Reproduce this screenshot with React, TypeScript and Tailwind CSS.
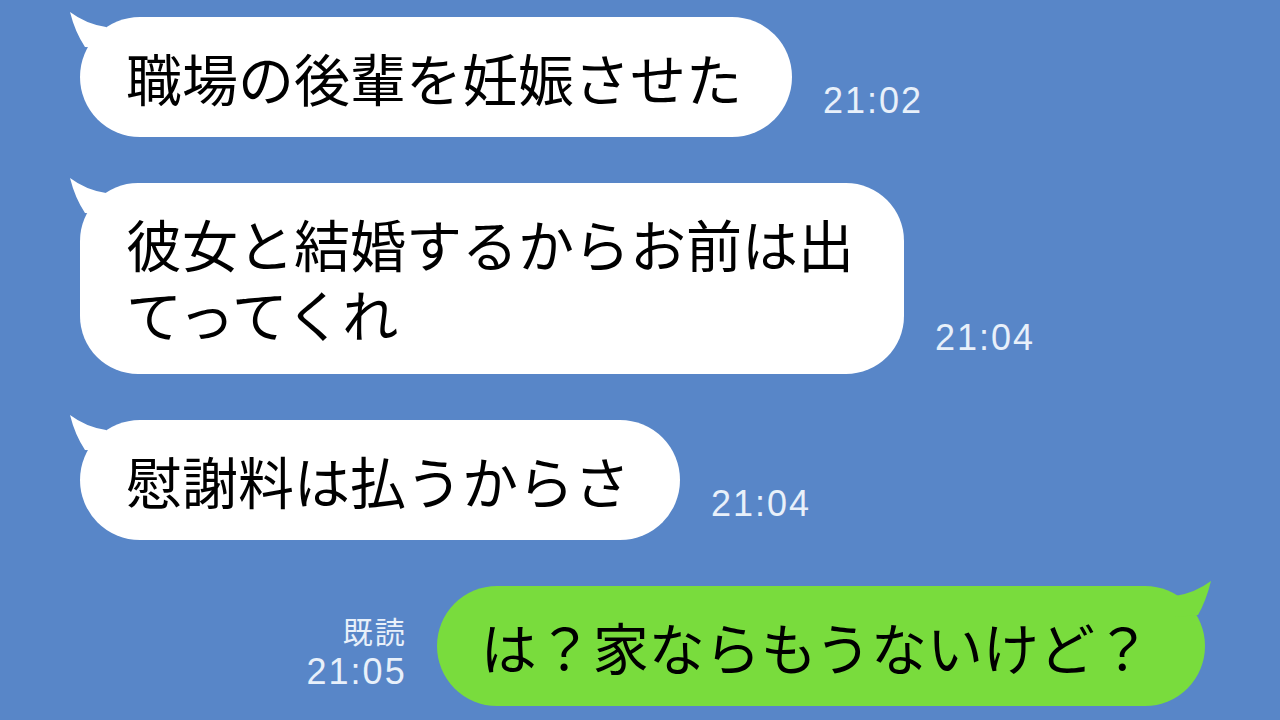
import React from "react";

const JP = '"Noto Sans CJK JP", "Noto Sans", sans-serif';
const TIME = '"Liberation Sans", "Noto Sans CJK JP", sans-serif';

function LeftTail() {
  return (
    <svg
      className="absolute left-[-12px] top-[-7px]"
      width="50"
      height="50"
      viewBox="0 0 50 50"
    >
      <path d="M2 2 Q7 22 17 37 L38 38 L38 17 Q18 14 2 2 Z" fill="#ffffff" />
    </svg>
  );
}

function RightTail() {
  return (
    <svg
      className="absolute right-[-8px] top-[-7px] scale-x-[-1]"
      width="50"
      height="50"
      viewBox="0 0 50 50"
    >
      <path d="M2 2 Q7 22 15 36 L38 38 L38 17 Q18 14 2 2 Z" fill="#79dc3d" />
    </svg>
  );
}

function Time({ t }: { t: string }) {
  return (
    <div
      className="text-[36px] leading-none tracking-[2px] text-[#e8f0fa] mb-[18px]"
      style={{ fontFamily: TIME }}
    >
      {t}
    </div>
  );
}

function LeftBubble({ children, rounded, pb }: { children: React.ReactNode; rounded: string; pb: string }) {
  return (
    <div
      className={`relative bg-white ${rounded} ${pb} pl-[46px] pr-[50px] pt-[25px] text-[56px] leading-[70px] text-black whitespace-nowrap`}
      style={{ fontFamily: JP }}
    >
      <LeftTail />
      <span className="relative">{children}</span>
    </div>
  );
}

export default function App() {
  return (
    <div className="w-[1280px] h-[720px] bg-[#5886c8] overflow-hidden flex flex-col pl-[80px] pt-[17px] gap-[46px]">
      <div className="flex items-end gap-[31px]">
        <LeftBubble rounded="rounded-[60px]" pb="pb-[25px]">職場の後輩を妊娠させた</LeftBubble>
        <Time t="21:02" />
      </div>
      <div className="flex items-end gap-[31px]">
        <LeftBubble rounded="rounded-[58px]" pb="pb-[26px]">
          彼女と結婚するからお前は出
          <br />
          てってくれ
        </LeftBubble>
        <Time t="21:04" />
      </div>
      <div className="flex items-end gap-[31px]">
        <LeftBubble rounded="rounded-[60px]" pb="pb-[25px]">慰謝料は払うからさ</LeftBubble>
        <Time t="21:04" />
      </div>
      <div className="flex items-end justify-end gap-[30px] pr-[75px]">
        <div className="flex flex-col items-end mb-[14px] text-[#e8f0fa]">
          <div
            className="text-[30px] leading-[44px] tracking-[2px]"
            style={{ fontFamily: JP }}
          >
            既読
          </div>
          <div
            className="text-[36px] leading-[40px] tracking-[2px]"
            style={{ fontFamily: TIME }}
          >
            21:05
          </div>
        </div>
        <div
          className="relative bg-[#79dc3d] rounded-[60px] pl-[44px] pr-[54px] py-[25px] text-[56px] leading-[70px] text-black whitespace-nowrap"
          style={{ fontFamily: JP }}
        >
          <RightTail />
          <span className="relative">は？家ならもうないけど？</span>
        </div>
      </div>
    </div>
  );
}
